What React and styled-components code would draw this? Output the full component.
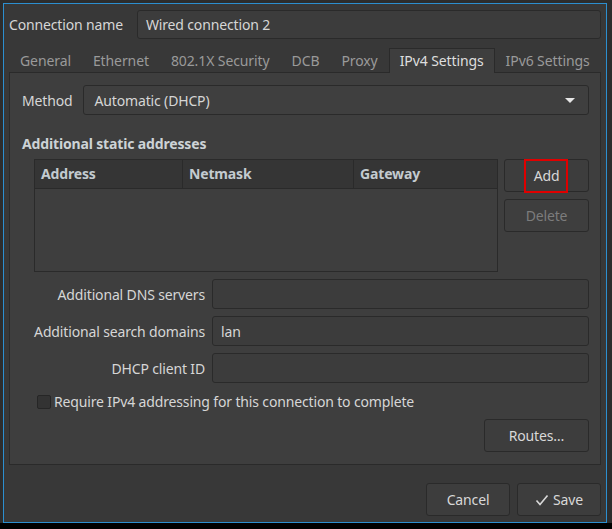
import styled, { createGlobalStyle } from "styled-components";

const Global = createGlobalStyle`
  html, body {
    margin: 0;
    padding: 0;
    background: #000;
  }
  body {
    font-family: "Noto Sans", "Open Sans", sans-serif;
    font-size: 14px;
    letter-spacing: -0.15px;
    color: #d6d6d6;
  }
`;

const Desktop = styled.div`
  height: 523px;
  background: #2d2d2d;
  padding: 3px 0 0 3px;
  box-sizing: border-box;
`;

const Window = styled.div`
  width: 604px;
  height: 520px;
  box-sizing: border-box;
  border: 1px solid #2c8fd0;
  background: #383838;
  padding: 6px 5px 5px 5px;
  display: flex;
  flex-direction: column;
`;

const NameRow = styled.div`
  display: flex;
  align-items: center;
  gap: 14px;
  height: 29px;
`;

const Label = styled.span`
  white-space: nowrap;
  flex: ${(p) => (p.fixed ? `0 0 ${p.fixed}px` : "none")};
  text-align: ${(p) => (p.right ? "right" : "left")};
`;

const Entry = styled.div`
  flex: 1;
  height: ${(p) => p.h || 30}px;
  box-sizing: border-box;
  border: 1px solid #2a2a2a;
  border-radius: 3px;
  background: #3c3c3c;
  display: flex;
  align-items: center;
  padding: 0 8px;
`;

const Tabs = styled.div`
  display: flex;
  margin-top: 6px;
  height: 27px;
  align-items: flex-end;
  position: relative;
  z-index: 1;
`;

const Tab = styled.div`
  padding: 0 10px;
  height: ${(p) => (p.active ? 25 : 24)}px;
  line-height: 24px;
  box-sizing: border-box;
  white-space: nowrap;
  letter-spacing: -0.1px;
  color: ${(p) => (p.active ? "#dedede" : "#9a9a9a")};
  background: ${(p) => (p.active ? "#3e3e3e" : "transparent")};
  border: 1px solid ${(p) => (p.active ? "#2a2a2a" : "transparent")};
  border-bottom: none;
  margin-bottom: ${(p) => (p.active ? -1 : 0)}px;
`;

const Panel = styled.div`
  height: 393px;
  box-sizing: border-box;
  border: 1px solid #2a2a2a;
  background: #3e3e3e;
  padding: 12px 11px 12px 12px;
  display: flex;
  flex-direction: column;
`;

const MethodRow = styled.div`
  display: flex;
  align-items: center;
  gap: 11px;
`;

const Combo = styled.div`
  flex: 1;
  height: 30px;
  box-sizing: border-box;
  border: 1px solid #2a2a2a;
  border-radius: 3px;
  background: #3f3f3f;
  display: flex;
  align-items: center;
  justify-content: space-between;
  padding: 0 13px 0 10px;
`;

const Arrow = styled.span`
  width: 0;
  height: 0;
  border-left: 5px solid transparent;
  border-right: 5px solid transparent;
  border-top: 5px solid #e6e6e6;
`;

const Heading = styled.div`
  font-weight: bold;
  color: #cdd3d6;
  margin-top: 19px;
  height: 20px;
  line-height: 20px;
`;

const AddressArea = styled.div`
  display: flex;
  gap: 6px;
  margin: 5px 0 0 12px;
`;

const Table = styled.div`
  width: 464px;
  height: 113px;
  box-sizing: border-box;
  border: 1px solid #2a2a2a;
  background: #3e3e3e;
`;

const TableHead = styled.div`
  display: grid;
  grid-template-columns: 147px 171px 1fr;
  height: 28px;
  background: #353535;
  border-bottom: 1px solid #2a2a2a;
`;

const HeadCell = styled.div`
  font-weight: bold;
  color: #c3cbd0;
  padding-left: 6px;
  line-height: 28px;
  border-left: ${(p) => (p.first ? "none" : "1px solid #2a2a2a")};
`;

const ButtonCol = styled.div`
  display: flex;
  flex-direction: column;
  gap: 7px;
`;

const Button = styled.div`
  position: relative;
  width: ${(p) => p.w}px;
  height: 33px;
  box-sizing: border-box;
  border: 1px solid #2a2a2a;
  border-radius: 3px;
  background: ${(p) => (p.disabled ? "#3e3e3e" : "#3d3d3d")};
  color: ${(p) => (p.disabled ? "#7c7c7c" : "#d8d8d8")};
  display: flex;
  align-items: center;
  justify-content: center;
  gap: 4px;
`;

const Highlight = styled.span`
  position: absolute;
  left: 19px;
  top: -1px;
  width: 44px;
  height: 34px;
  box-sizing: border-box;
  border: 2px solid #e00000;
`;

const Form = styled.div`
  display: flex;
  flex-direction: column;
  gap: 7px;
  margin-top: 7px;
`;

const FormRow = styled.div`
  display: flex;
  align-items: center;
  gap: 7px;
`;

const CheckRow = styled.label`
  display: flex;
  align-items: center;
  gap: 3px;
  margin: 9px 0 0 15px;
`;

const Box = styled.span`
  width: 14px;
  height: 14px;
  box-sizing: border-box;
  border: 1px solid #262626;
  border-radius: 2px;
  background: #333333;
`;

const RoutesRow = styled.div`
  display: flex;
  justify-content: flex-end;
  margin-top: 8px;
`;

const Footer = styled.div`
  display: flex;
  justify-content: flex-end;
  gap: 7px;
  margin-top: 18px;
`;

const tabs = [
  "General",
  "Ethernet",
  "802.1X Security",
  "DCB",
  "Proxy",
  "IPv4 Settings",
  "IPv6 Settings",
];

const fields = [
  ["Additional DNS servers", ""],
  ["Additional search domains", "lan"],
  ["DHCP client ID", ""],
];

const App = () => {
  return (
    <Desktop>
      <Global />
      <Window>
        <NameRow>
          <Label fixed={112}>Connection name</Label>
          <Entry h={29}>Wired connection 2</Entry>
        </NameRow>
        <Tabs>
          {tabs.map((t) => (
            <Tab key={t} active={t === "IPv4 Settings"}>
              {t}
            </Tab>
          ))}
        </Tabs>
        <Panel>
          <MethodRow>
            <Label>Method</Label>
            <Combo>
              <span>Automatic (DHCP)</span>
              <Arrow />
            </Combo>
          </MethodRow>
          <Heading>Additional static addresses</Heading>
          <AddressArea>
            <Table>
              <TableHead>
                <HeadCell first>Address</HeadCell>
                <HeadCell>Netmask</HeadCell>
                <HeadCell>Gateway</HeadCell>
              </TableHead>
            </Table>
            <ButtonCol>
              <Button w={85}>
                Add
                <Highlight />
              </Button>
              <Button w={85} disabled>
                Delete
              </Button>
            </ButtonCol>
          </AddressArea>
          <Form>
            {fields.map(([name, value]) => (
              <FormRow key={name}>
                <Label fixed={183} right>
                  {name}
                </Label>
                <Entry>{value}</Entry>
              </FormRow>
            ))}
          </Form>
          <CheckRow>
            <Box />
            <span>Require IPv4 addressing for this connection to complete</span>
          </CheckRow>
          <RoutesRow>
            <Button w={105}>Routes…</Button>
          </RoutesRow>
        </Panel>
        <Footer>
          <Button w={84}>Cancel</Button>
          <Button w={84}>
            <svg width="14" height="14" viewBox="0 0 14 14">
              <polyline
                points="1.5,7.5 5,11.5 12.5,2.5"
                fill="none"
                stroke="#d8d8d8"
                strokeWidth="1.6"
              />
            </svg>
            Save
          </Button>
        </Footer>
      </Window>
    </Desktop>
  );
};

export default App;
